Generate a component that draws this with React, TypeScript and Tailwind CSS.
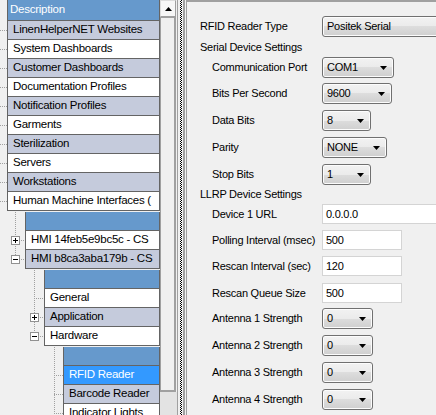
import type { ReactNode } from 'react'

type Tone = 'w' | 'g' | 's'

type Row = { label: string; tone: Tone; exp?: '+' | '-' }

type Level = {
  gutter: number
  lineX?: number
  headerH: number
  headerCls: string
  title?: string
  rows: Row[]
  childCls?: string
  child?: Level
}

const toneCls: Record<Tone, string> = {
  w: 'bg-white text-black',
  g: 'bg-[#c5cbdc] text-black',
  s: 'bg-[#3399ff] text-white',
}

const tree: Level = {
  gutter: 7,
  headerH: 20,
  headerCls: 'h-[20px]',
  title: 'Description',
  rows: [
    { label: 'LinenHelperNET Websites', tone: 'g' },
    { label: 'System Dashboards', tone: 'w' },
    { label: 'Customer Dashboards', tone: 'g' },
    { label: 'Documentation Profiles', tone: 'w' },
    { label: 'Notification Profiles', tone: 'g' },
    { label: 'Garments', tone: 'w' },
    { label: 'Sterilization', tone: 'g' },
    { label: 'Servers', tone: 'w' },
    { label: 'Workstations', tone: 'g' },
    { label: 'Human Machine Interfaces (', tone: 'w' },
  ],
  childCls: 'ml-[7px] mt-px',
  child: {
    gutter: 18,
    lineX: 8,
    headerH: 18,
    headerCls: 'h-[18px]',
    rows: [
      { label: 'HMI 14feb5e9bc5c - CS', tone: 'w', exp: '+' },
      { label: 'HMI b8ca3aba179b - CS', tone: 'g', exp: '-' },
    ],
    childCls: 'ml-[18px] mt-px',
    child: {
      gutter: 19,
      lineX: 9,
      headerH: 18,
      headerCls: 'h-[18px]',
      rows: [
        { label: 'General', tone: 'w' },
        { label: 'Application', tone: 'g', exp: '+' },
        { label: 'Hardware', tone: 'w', exp: '-' },
      ],
      childCls: 'ml-[19px] mt-px',
      child: {
        gutter: 19,
        lineX: 10,
        headerH: 18,
        headerCls: 'h-[18px]',
        rows: [
          { label: 'RFID Reader', tone: 's' },
          { label: 'Barcode Reader', tone: 'g' },
          { label: 'Indicator Lights', tone: 'w' },
        ],
      },
    },
  },
}

// connector lines and +/- boxes to the left of a list
function Gutter({ level, h }: { level: Level; h: number }) {
  const centers = level.rows.map((_, i) => level.headerH + 19 * i + 10)
  const last = centers[centers.length - 1]
  const x0 = level.lineX ?? 0
  return (
    <svg width={level.gutter} height={h} className="block shrink-0" shapeRendering="crispEdges">
      {level.lineX !== undefined && (
        <line x1={x0 + 0.5} y1={0} x2={x0 + 0.5} y2={last} stroke="#a0a0a0" strokeDasharray="1 1" />
      )}
      {centers.map((cy, i) => {
        const r = level.rows[i]
        return (
          <g key={i}>
            <line x1={x0} y1={cy + 0.5} x2={level.gutter} y2={cy + 0.5} stroke="#a0a0a0" strokeDasharray="1 1" />
            {r.exp && (
              <g>
                <rect x={x0 - 3.5} y={cy - 3.5} width={8} height={8} fill="#fff" stroke="#919191" />
                <line x1={x0 - 2} y1={cy + 0.5} x2={x0 + 3} y2={cy + 0.5} stroke="#000" />
                {r.exp === '+' && <line x1={x0 + 0.5} y1={cy - 2} x2={x0 + 0.5} y2={cy + 3} stroke="#000" />}
              </g>
            )}
          </g>
        )
      })}
    </svg>
  )
}

function TreeList({ level }: { level: Level }) {
  const h = level.headerH + level.rows.length * 19 + 1
  return (
    <div className="flex flex-col">
      <div className="flex">
        <Gutter level={level} h={h} />
        <div className="flex min-w-0 flex-1 flex-col border-x border-b border-[#646464]">
          <div className={`${level.headerCls} flex items-center bg-[#6699cc] pl-[2px] text-white`}>
            {level.title}
          </div>
          {level.rows.map((r) => (
            <div
              key={r.label}
              className={`flex h-[19px] items-center overflow-hidden whitespace-nowrap border-t border-[#646464] pl-[5px] ${toneCls[r.tone]}`}
            >
              {r.label}
            </div>
          ))}
        </div>
      </div>
      {level.child && (
        <div className={level.childCls}>
          <TreeList level={level.child} />
        </div>
      )}
    </div>
  )
}

function Arrow() {
  return (
    <svg width="7" height="4" className="block shrink-0">
      <polygon points="0,0 7,0 3.5,4" fill="#000" />
    </svg>
  )
}

function Combo({ value, w }: { value: string; w: string }) {
  return (
    <div
      className={`${w} flex h-[21px] shrink-0 items-center justify-between rounded-[3px] border border-[#707070] bg-[linear-gradient(#f2f2f2,#ebebeb_50%,#dddddd_50%,#cfcfcf)] pl-[4px] pr-[6px] shadow-[inset_0_0_0_1px_#fcfcfc]`}
    >
      <span>{value}</span>
      <Arrow />
    </div>
  )
}

function TextBox({ value, w }: { value: string; w: string }) {
  return (
    <div className={`${w} flex h-[20px] shrink-0 items-center border border-[#d4d4d4] bg-white pl-[3px]`}>
      {value}
    </div>
  )
}

function Field({ label, mt, top, children }: { label: string; mt: string; top?: boolean; children: ReactNode }) {
  return (
    <div className={`flex items-center ${mt}`}>
      <div className={top ? 'w-[122px] shrink-0' : 'w-[122px] shrink-0 pl-[12px]'}>{label}</div>
      {children}
    </div>
  )
}

export default function App() {
  return (
    <div className="flex h-[415px] w-[436px] overflow-hidden bg-[#f0f0f0] font-['Liberation_Sans',Arial,sans-serif]">
      {/* tree side */}
      <div className="w-[160px] shrink-0 overflow-hidden text-[11.5px] tracking-[-0.25px]">
        <TreeList level={tree} />
      </div>

      {/* scrollbar */}
      <div className="flex w-[17px] shrink-0 flex-col">
        <div className="flex h-[17px] w-[16px] items-center justify-center border border-[#dcdcdc] border-b-[#a0a0a0] border-r-[#a0a0a0] bg-[#f7f7f7]">
          <svg width="7" height="4" className="block">
            <polygon points="3.5,0 7,4 0,4" fill="#000" />
          </svg>
        </div>
        <div className="h-[375px] w-[16px] border border-[#a0a0a0] border-r-2 border-b-2 bg-[#f0f0f0]" />
        <div className="flex-1 bg-[#e3e3e3]" />
      </div>
      <div className="w-px shrink-0 bg-[#a0a0a0]" />
      <div className="w-[2px] shrink-0" />
      {/* splitter */}
      <div className="w-[2px] shrink-0 bg-[conic-gradient(#000_25%,#fff_0_50%,#000_0_75%,#fff_0)] bg-size-[2px_2px]" />
      <div className="w-px shrink-0" />

      {/* settings panel */}
      <div className="flex min-w-0 flex-1 border-l-2 border-[#a0a0a0] pl-px">
        <div className="min-w-0 flex-1 overflow-hidden border-l border-t-2 border-[#a0a0a0] pl-[13px] text-[11px] tracking-[-0.25px] text-black">
          <Field label="RFID Reader Type" mt="mt-[14px]" top>
            <Combo value="Positek Serial" w="w-[160px]" />
          </Field>
          <div className="flex h-[20px] items-center">Serial Device Settings</div>
          <Field label="Communication Port" mt="mt-0">
            <Combo value="COM1" w="w-[72px]" />
          </Field>
          <Field label="Bits Per Second" mt="mt-[5px]">
            <Combo value="9600" w="w-[70px]" />
          </Field>
          <Field label="Data Bits" mt="mt-[6px]">
            <Combo value="8" w="w-[49px]" />
          </Field>
          <Field label="Parity" mt="mt-[6px]">
            <Combo value="NONE" w="w-[65px]" />
          </Field>
          <Field label="Stop Bits" mt="mt-[6px]">
            <Combo value="1" w="w-[49px]" />
          </Field>
          <div className="flex h-[18px] items-center">LLRP Device Settings</div>
          <Field label="Device 1 URL" mt="mt-px">
            <TextBox value="0.0.0.0" w="w-[160px]" />
          </Field>
          <Field label="Polling Interval (msec)" mt="mt-[6px]">
            <TextBox value="500" w="w-[80px]" />
          </Field>
          <Field label="Rescan Interval (sec)" mt="mt-[6px]">
            <TextBox value="120" w="w-[80px]" />
          </Field>
          <Field label="Rescan Queue Size" mt="mt-[7px]">
            <TextBox value="500" w="w-[80px]" />
          </Field>
          <Field label="Antenna 1 Strength" mt="mt-[5px]">
            <Combo value="0" w="w-[51px]" />
          </Field>
          <Field label="Antenna 2 Strength" mt="mt-[6px]">
            <Combo value="0" w="w-[51px]" />
          </Field>
          <Field label="Antenna 3 Strength" mt="mt-[6px]">
            <Combo value="0" w="w-[51px]" />
          </Field>
          <Field label="Antenna 4 Strength" mt="mt-[6px]">
            <Combo value="0" w="w-[51px]" />
          </Field>
        </div>
      </div>
    </div>
  )
}
